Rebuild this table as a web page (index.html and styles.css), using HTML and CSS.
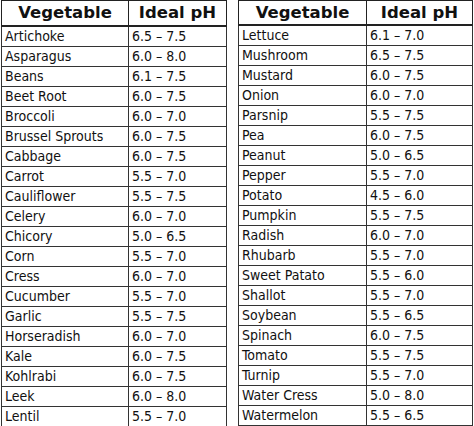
FILE: index.html
```html
<!DOCTYPE html>
<html>
<head>
<meta charset="utf-8">
<link rel="stylesheet" href="styles.css">
</head>
<body>
<div class="page">
  <table class="ph left">
    <thead><tr><th class="c1">Vegetable</th><th class="c2">Ideal pH</th></tr></thead>
    <tbody>
      <tr><td>Artichoke</td><td>6.5 – 7.5</td></tr>
      <tr><td>Asparagus</td><td>6.0 – 8.0</td></tr>
      <tr><td>Beans</td><td>6.1 – 7.5</td></tr>
      <tr><td>Beet Root</td><td>6.0 – 7.5</td></tr>
      <tr><td>Broccoli</td><td>6.0 – 7.0</td></tr>
      <tr><td>Brussel Sprouts</td><td>6.0 – 7.5</td></tr>
      <tr><td>Cabbage</td><td>6.0 – 7.5</td></tr>
      <tr><td>Carrot</td><td>5.5 – 7.0</td></tr>
      <tr><td>Cauliflower</td><td>5.5 – 7.5</td></tr>
      <tr><td>Celery</td><td>6.0 – 7.0</td></tr>
      <tr><td>Chicory</td><td>5.0 – 6.5</td></tr>
      <tr><td>Corn</td><td>5.5 – 7.0</td></tr>
      <tr><td>Cress</td><td>6.0 – 7.0</td></tr>
      <tr><td>Cucumber</td><td>5.5 – 7.0</td></tr>
      <tr><td>Garlic</td><td>5.5 – 7.5</td></tr>
      <tr><td>Horseradish</td><td>6.0 – 7.0</td></tr>
      <tr><td>Kale</td><td>6.0 – 7.5</td></tr>
      <tr><td>Kohlrabi</td><td>6.0 – 7.5</td></tr>
      <tr><td>Leek</td><td>6.0 – 8.0</td></tr>
      <tr><td>Lentil</td><td>5.5 – 7.0</td></tr>
    </tbody>
  </table>
  <table class="ph right">
    <thead><tr><th class="c1">Vegetable</th><th class="c2">Ideal pH</th></tr></thead>
    <tbody>
      <tr><td>Lettuce</td><td>6.1 – 7.0</td></tr>
      <tr><td>Mushroom</td><td>6.5 – 7.5</td></tr>
      <tr><td>Mustard</td><td>6.0 – 7.5</td></tr>
      <tr><td>Onion</td><td>6.0 – 7.0</td></tr>
      <tr><td>Parsnip</td><td>5.5 – 7.5</td></tr>
      <tr><td>Pea</td><td>6.0 – 7.5</td></tr>
      <tr><td>Peanut</td><td>5.0 – 6.5</td></tr>
      <tr><td>Pepper</td><td>5.5 – 7.0</td></tr>
      <tr><td>Potato</td><td>4.5 – 6.0</td></tr>
      <tr><td>Pumpkin</td><td>5.5 – 7.5</td></tr>
      <tr><td>Radish</td><td>6.0 – 7.0</td></tr>
      <tr><td>Rhubarb</td><td>5.5 – 7.0</td></tr>
      <tr><td>Sweet Patato</td><td>5.5 – 6.0</td></tr>
      <tr><td>Shallot</td><td>5.5 – 7.0</td></tr>
      <tr><td>Soybean</td><td>5.5 – 6.5</td></tr>
      <tr><td>Spinach</td><td>6.0 – 7.5</td></tr>
      <tr><td>Tomato</td><td>5.5 – 7.5</td></tr>
      <tr><td>Turnip</td><td>5.5 – 7.0</td></tr>
      <tr><td>Water Cress</td><td>5.0 – 8.0</td></tr>
      <tr><td>Watermelon</td><td>5.5 – 6.5</td></tr>
    </tbody>
  </table>
</div>
</body>
</html>
```

FILE: styles.css
```css
html, body {
  margin: 0;
  padding: 0;
  background: #ffffff;
}
.page {
  display: flex;
  gap: 11px;
  padding-left: 1px;
  font-family: "DejaVu Sans Condensed", "DejaVu Sans", sans-serif;
  color: #111;
}
.ph {
  border-collapse: collapse;
  table-layout: fixed;
}
.ph.left { width: 226px; }
.ph.right { width: 235px; }
.ph.left .c1 { width: 126px; }
.ph.right .c1 { width: 127px; }
.ph th {
  height: 24px;
  padding: 0;
  font-family: "DejaVu Sans", sans-serif;
  font-size: 16.5px;
  font-weight: bold;
  text-align: center;
  border: 1px solid #222;
  border-bottom-width: 2px;
  line-height: 24px;
}
.ph.right th {
  height: 23px;
  line-height: 23px;
}
.ph td {
  height: 19px;
  padding: 0 0 0 3px;
  font-size: 14px;
  line-height: 19px;
  border: 1px solid #333;
  white-space: nowrap;
  overflow: hidden;
}
.ph.right tbody tr:last-child td {
  border-bottom-width: 2px;
}
```
